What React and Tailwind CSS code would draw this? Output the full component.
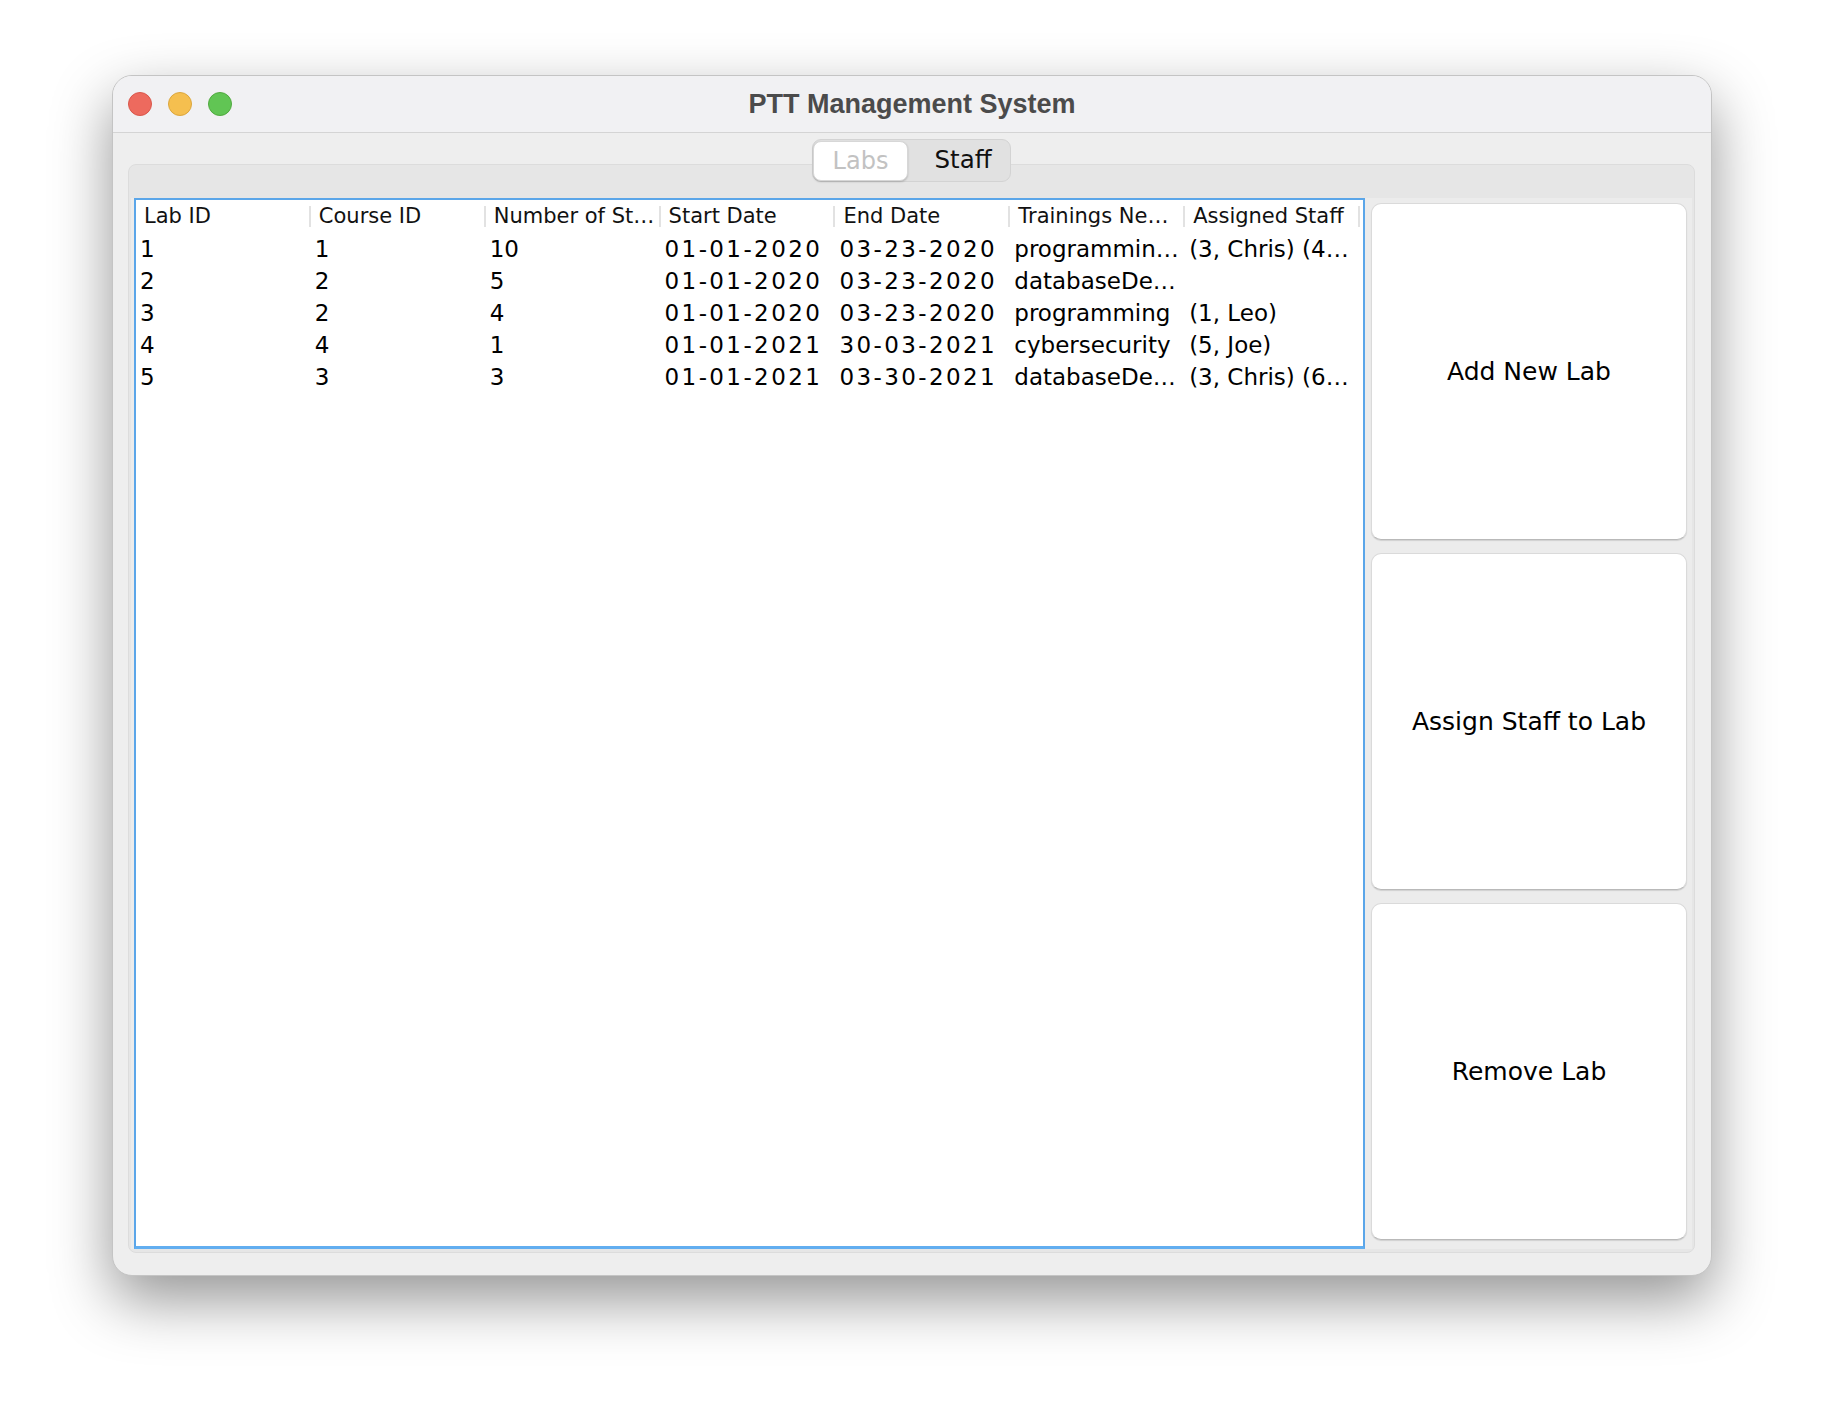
import React from "react";

// Columnas de la tabla de laboratorios
const columns = [
  "Lab ID",
  "Course ID",
  "Number of St…",
  "Start Date",
  "End Date",
  "Trainings Ne…",
  "Assigned Staff",
];

const labs = [
  ["1", "1", "10", "01-01-2020", "03-23-2020", "programmin…", "(3, Chris) (4…"],
  ["2", "2", "5", "01-01-2020", "03-23-2020", "databaseDe…", ""],
  ["3", "2", "4", "01-01-2020", "03-23-2020", "programming", "(1, Leo)"],
  ["4", "4", "1", "01-01-2021", "30-03-2021", "cybersecurity", "(5, Joe)"],
  ["5", "3", "3", "01-01-2021", "03-30-2021", "databaseDe…", "(3, Chris) (6…"],
];

const actions = ["Add New Lab", "Assign Staff to Lab", "Remove Lab"];

const sans = "font-['DejaVu_Sans',sans-serif]";

function TrafficLights() {
  return (
    <div className="flex items-center gap-[16px] pl-[15px]">
      <span className="block h-[24px] w-[24px] rounded-full border border-[#d9574b] bg-[#ed6a5e]" />
      <span className="block h-[24px] w-[24px] rounded-full border border-[#dba63d] bg-[#f5bf4f]" />
      <span className="block h-[24px] w-[24px] rounded-full border border-[#51a93f] bg-[#61c554]" />
    </div>
  );
}

function LabsTable() {
  return (
    <div className="h-full w-[1231px] shrink-0 border-2 border-b-[3px] border-[#5ba6e9] border-b-[#62aef0] bg-white">
      {/* Encabezado */}
      <div className="grid h-[33px] w-[1224px] grid-cols-7 items-center">
        {columns.map((col) => (
          <div key={col} className="flex h-full items-center justify-between">
            <span className={`${sans} pl-[8px] text-[21px] leading-none text-[#111]`}>{col}</span>
            <span className="block h-[21px] w-[2px] bg-[#e2e2e2]" />
          </div>
        ))}
      </div>

      {/* Filas */}
      {labs.map((row) => (
        <div key={row[0]} className="grid h-[32px] w-[1224px] grid-cols-7 items-center">
          {row.map((cell, i) => (
            <div
              key={i}
              className={`${sans} whitespace-nowrap pl-[4px] text-[23px] leading-none text-black ${
                i === 3 || i === 4 ? "tracking-[2.4px]" : ""
              }`}
            >
              {cell}
            </div>
          ))}
        </div>
      ))}
    </div>
  );
}

export default function App() {
  return (
    <div className="h-[1424px] w-[1824px] bg-white pl-[112px] pt-[75px]">
      <div className="flex h-[1201px] w-[1600px] flex-col overflow-hidden rounded-[20px] border border-[#c4c4c4] bg-[#eeeeee] shadow-[0_24px_60px_rgba(0,0,0,0.42)]">
        {/* Barra de título */}
        <div className="grid h-[57px] shrink-0 grid-cols-[1fr_auto_1fr] items-center border-b border-[#d4d4d4] bg-[#f1f1f3]">
          <TrafficLights />
          <span className="font-['Liberation_Sans',sans-serif] text-[27px] font-bold leading-none text-[#4b4b4b]">
            PTT Management System
          </span>
          <span />
        </div>

        {/* Cuerpo */}
        <div className="flex flex-1 flex-col pl-[15px] pr-[16px] pt-[6px]">
          {/* Pestañas */}
          <div className="relative z-10 flex justify-center">
            <div className="flex h-[43px] w-[199px] rounded-[9px] border border-[#d3d3d3] bg-[#e1e1e1]">
              <div className="flex h-[40px] w-[95px] items-center justify-center self-center rounded-[8px] border border-[#d7d7d7] bg-white shadow-[0_1px_2px_rgba(0,0,0,0.2)]">
                <span className={`${sans} text-[24px] leading-none text-[#c2c2c2] [text-shadow:0_1px_0_#ffffff]`}>
                  Labs
                </span>
              </div>
              <div className="flex flex-1 items-center justify-center pl-[8px]">
                <span className={`${sans} text-[24.5px] leading-none text-[#111]`}>Staff</span>
              </div>
            </div>
          </div>

          {/* Panel de pestaña */}
          <div className="-mt-[18px] flex h-[1089px] flex-col rounded-[8px] border border-[#dcdcdc] bg-[#e6e6e6] px-[2px] pb-[3px] pt-[33px]">
            <div className="flex flex-1 gap-[6px] bg-[#ececec] pl-[3px] pr-[5px]">
              <LabsTable />

              {/* Botones */}
              <div className="flex flex-1 flex-col gap-[13px] pb-[9px] pt-[5px]">
                {actions.map((label) => (
                  <button
                    key={label}
                    type="button"
                    className={`${sans} flex flex-1 items-center justify-center rounded-[10px] border border-[#dadada] border-b-[#b9b9b9] bg-white text-[25px] leading-none text-black shadow-[0_1px_1px_rgba(0,0,0,0.12)]`}
                  >
                    {label}
                  </button>
                ))}
              </div>
            </div>
          </div>
        </div>
      </div>
    </div>
  );
}
